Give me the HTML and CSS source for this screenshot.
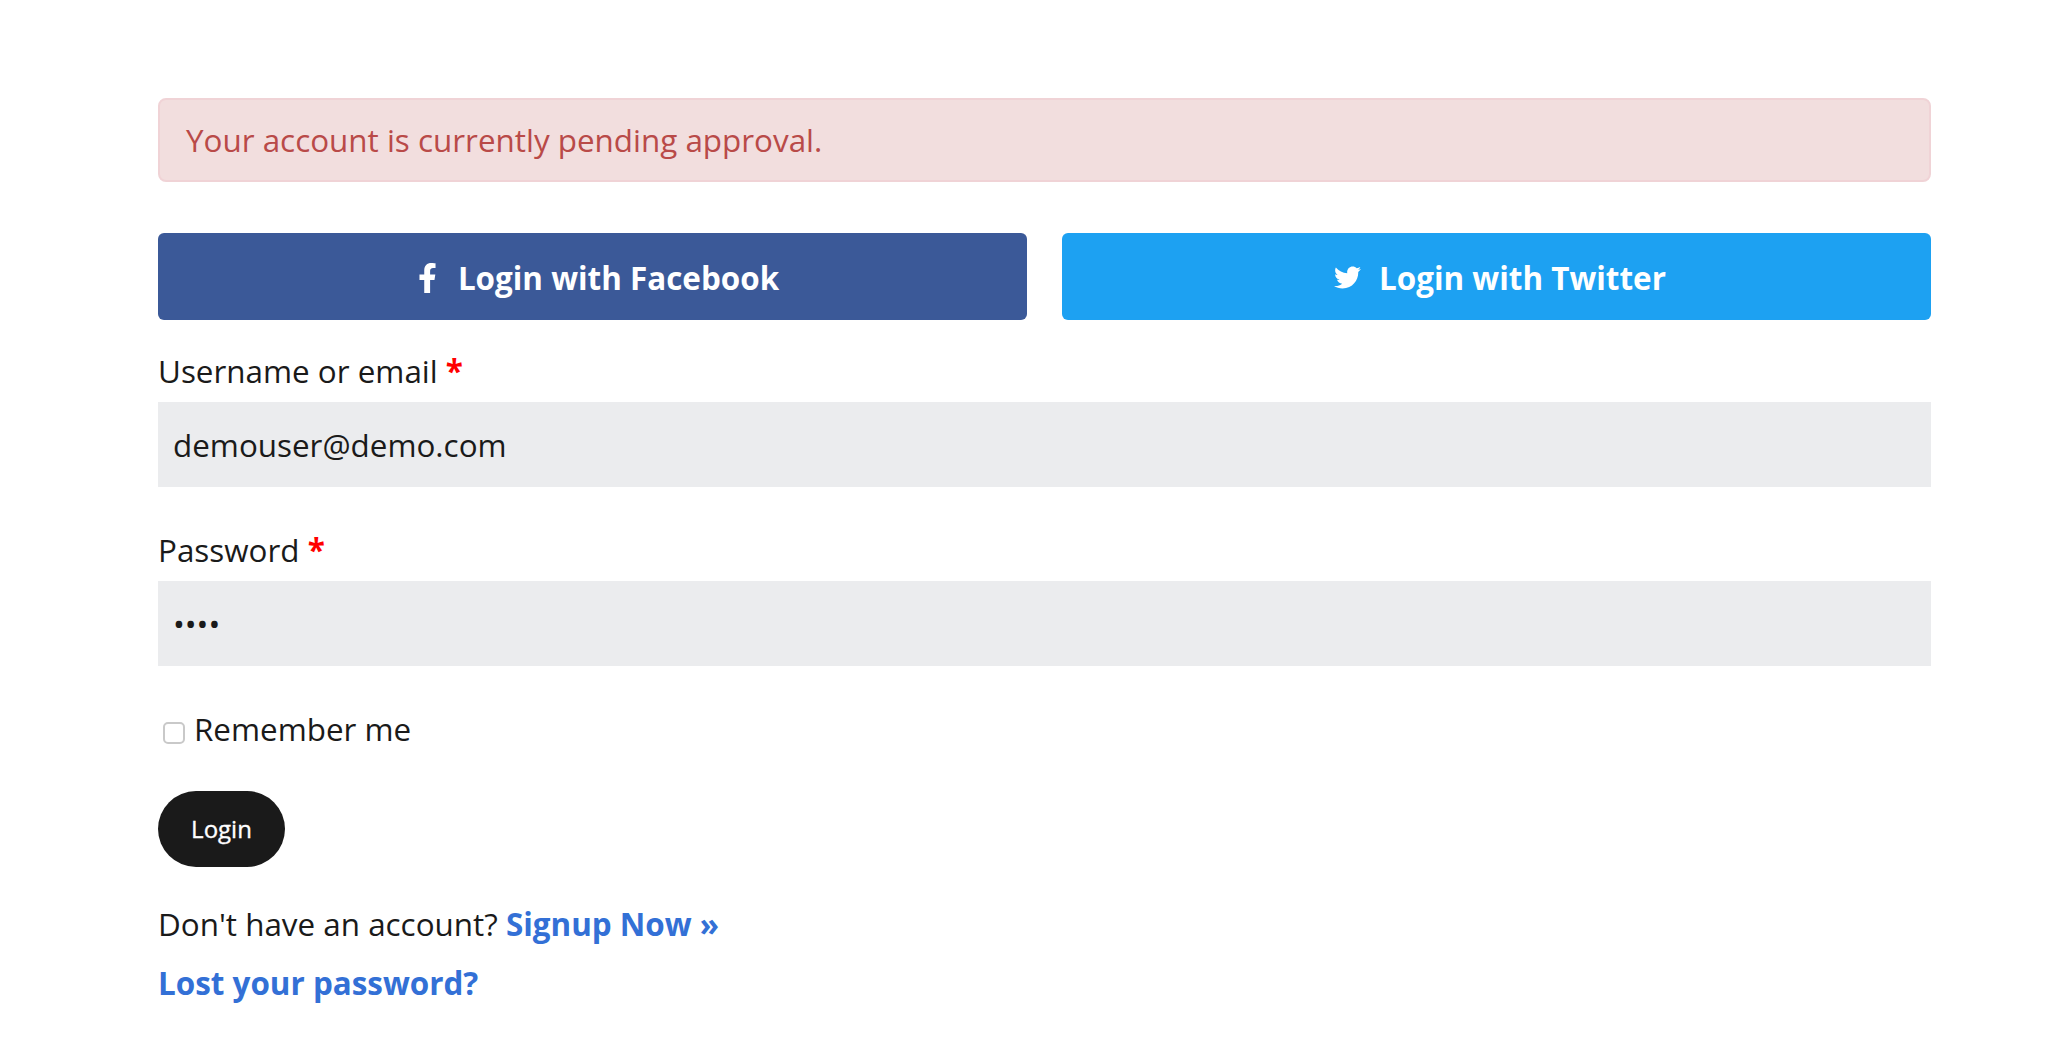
FILE: index.html
```html
<!DOCTYPE html>
<html lang="en">
<head>
<meta charset="utf-8">
<title>Login</title>
<link rel="stylesheet" href="styles.css">
</head>
<body>
<main class="page">
  <div class="alert">Your account is currently pending approval.</div>
  <div class="social">
    <a class="social-btn fb" href="#">
      <svg class="fb-icon" viewBox="0 0 320 512" aria-hidden="true"><path fill="currentColor" d="M279.14 288l14.22-92.66h-88.91v-60.13c0-25.35 12.42-50.06 52.24-50.06h40.42V6.26S260.43 0 225.36 0c-73.22 0-121.08 44.38-121.08 124.72v70.62H22.89V288h81.39v224h100.17V288z"/></svg>
      <span>Login with Facebook</span>
    </a>
    <a class="social-btn tw" href="#">
      <svg class="tw-icon" viewBox="0 0 512 512" aria-hidden="true"><path fill="currentColor" d="M459.37 151.716c.325 4.548.325 9.097.325 13.645 0 138.72-105.583 298.558-298.558 298.558-59.452 0-114.68-17.219-161.137-47.106 8.447.974 16.568 1.299 25.34 1.299 49.055 0 94.213-16.568 130.274-44.832-46.132-.975-84.792-31.188-98.112-72.772 6.498.974 12.995 1.624 19.818 1.624 9.421 0 18.843-1.3 27.614-3.573-48.081-9.747-84.143-51.98-84.143-102.985v-1.299c13.969 7.797 30.214 12.67 47.431 13.319-28.264-18.843-46.781-51.005-46.781-87.391 0-19.492 5.197-37.36 14.294-52.954 51.655 63.675 129.3 105.258 216.365 109.807-1.624-7.797-2.599-15.918-2.599-24.04 0-57.828 46.782-104.934 104.934-104.934 30.213 0 57.502 12.67 76.67 33.137 23.715-4.548 46.456-13.32 66.599-25.34-7.798 23.716-24.366 43.859-46.132 56.178 21.117-2.274 41.584-8.122 60.426-16.243-14.292 20.791-32.161 39.308-52.628 54.253z"/></svg>
      <span>Login with Twitter</span>
    </a>
  </div>
  <form class="form">
    <div class="field">
      <label class="label" for="user">Username or email <span class="req">*</span></label>
      <input class="input" id="user" type="text" value="demouser@demo.com">
    </div>
    <div class="field">
      <label class="label" for="pass">Password <span class="req">*</span></label>
      <input class="input input-pass" id="pass" type="password" value="demo">
    </div>
    <label class="remember"><span class="check"></span>Remember me</label>
    <button class="login" type="button">Login</button>
    <p class="line first">Don't have an account? <a href="#">Signup Now »</a></p>
    <p class="line"><a href="#">Lost your password?</a></p>
  </form>
</main>
</body>
</html>
```
FILE: styles.css
```css
* { box-sizing: border-box; }
html, body { margin: 0; background: #fff; }
body {
  font-family: "Open Sans", "Noto Sans", sans-serif;
  font-size: 31.4px;
  color: #1a1a1a;
}
.page {
  padding: 98px 117px 0 158px;
  height: 1047px;
  overflow: hidden;
}
.alert {
  height: 84px;
  padding: 0 26px 2px;
  display: flex;
  align-items: center;
  background: #f2dede;
  border: 2px solid #f0d3d6;
  border-radius: 8px;
  color: #b94a48;
}
.social {
  display: grid;
  grid-template-columns: 1fr 1fr;
  gap: 35px;
  margin-top: 51px;
}
.social-btn {
  height: 87px;
  display: flex;
  align-items: center;
  justify-content: center;
  padding-top: 2px;
  border-radius: 6px;
  color: #fff;
  font-weight: 700;
  text-decoration: none;
}
.fb { background: #3b5998; gap: 21px; padding-left: 12px; }
.tw { background: #1da1f2; gap: 18px; padding-left: 7px; }
.fb-icon { width: 19px; height: 30px; }
.tw-icon { width: 27px; height: 27px; }
.form { margin-top: 23px; }
.field { margin-bottom: 35px; }
.label { display: block; height: 59px; line-height: 56px; }
.req { color: #f00; font-weight: 700; }
.input {
  display: block;
  width: 100%;
  height: 85px;
  padding: 0 15px;
  border: 0;
  background: #ebecee;
  font: inherit;
  color: #1a1a1a;
  outline: none;
}
.remember {
  display: flex;
  align-items: center;
  height: 44px;
  padding: 0 0 3px 5px;
  margin-top: 42px;
}
.check {
  width: 22px;
  height: 22px;
  margin: 9px 9px 0 0;
  border: 2px solid #c9c9c9;
  border-radius: 5px;
  background: #fff;
}
.login {
  display: block;
  width: 127px;
  height: 76px;
  margin-top: 39px;
  padding: 0 0 2px;
  border: 0;
  border-radius: 38px;
  background: #1a1a1a;
  color: #fff;
  font-family: inherit;
  font-size: 24px;
  font-weight: 400;
  -webkit-text-stroke: 0.35px #fff;
}
.line { margin: 15px 0 0; line-height: 44px; }
.line.first { margin-top: 35px; }
.line a { color: #3370d6; font-weight: 700; text-decoration: none; }
```
